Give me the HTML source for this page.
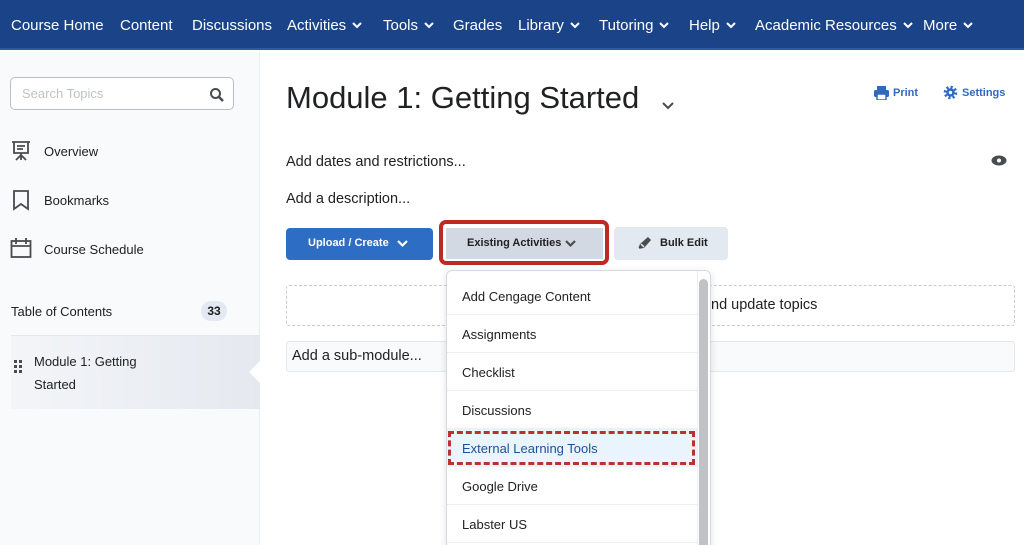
<!DOCTYPE html>
<html><head><meta charset="utf-8"><style>
*{margin:0;padding:0;box-sizing:border-box}
html,body{width:1024px;height:545px;overflow:hidden}
body{background:#fff;font-family:"Liberation Sans",sans-serif;color:#202122;position:relative}
.a{position:absolute;white-space:nowrap}
.nav{position:absolute;left:0;top:0;width:1024px;height:50px;background:#1b4488;border-bottom:2px solid #2d5aa3}
.nav span{position:absolute;top:17px;color:#fff;font-size:15px;line-height:18px}
.ch{display:inline-block;vertical-align:middle;margin-left:6px;margin-top:-2px}
.side{position:absolute;left:0;top:52px;width:260px;height:493px;background:#f9fafb;border-right:1px solid #eceef1}
.dd{position:absolute;left:446px;top:270px;width:265px;height:280px;background:#fff;border:1px solid #d6dae0;border-radius:6px;box-shadow:0 2px 8px rgba(0,0,0,.12);overflow:hidden}
.it{position:absolute;left:0;width:250px;height:38px;border-bottom:1px solid #eceef1;font-size:13px;padding:12px 0 0 15px;color:#202122}
</style></head><body>
<div class="nav">
<span style="left:11px">Course Home</span>
<span style="left:120px">Content</span>
<span style="left:192px">Discussions</span>
<span style="left:287px">Activities<svg class="ch" width="10" height="7" viewBox="0 0 10 7"><path d="M1 1l4 4 4-4" fill="none" stroke="#fff" stroke-width="2"/></svg></span>
<span style="left:383px">Tools<svg class="ch" width="10" height="7" viewBox="0 0 10 7"><path d="M1 1l4 4 4-4" fill="none" stroke="#fff" stroke-width="2"/></svg></span>
<span style="left:453px">Grades</span>
<span style="left:518px">Library<svg class="ch" width="10" height="7" viewBox="0 0 10 7"><path d="M1 1l4 4 4-4" fill="none" stroke="#fff" stroke-width="2"/></svg></span>
<span style="left:599px">Tutoring<svg class="ch" width="10" height="7" viewBox="0 0 10 7"><path d="M1 1l4 4 4-4" fill="none" stroke="#fff" stroke-width="2"/></svg></span>
<span style="left:689px">Help<svg class="ch" width="10" height="7" viewBox="0 0 10 7"><path d="M1 1l4 4 4-4" fill="none" stroke="#fff" stroke-width="2"/></svg></span>
<span style="left:755px">Academic Resources<svg class="ch" width="10" height="7" viewBox="0 0 10 7"><path d="M1 1l4 4 4-4" fill="none" stroke="#fff" stroke-width="2"/></svg></span>
<span style="left:923px">More<svg class="ch" width="10" height="7" viewBox="0 0 10 7"><path d="M1 1l4 4 4-4" fill="none" stroke="#fff" stroke-width="2"/></svg></span>
</div>
<div class="side">
<div class="a" style="left:10px;top:25px;width:224px;height:33px;border:1px solid #b9bec5;border-radius:5px;background:#fff;font-size:13px;color:#bfc3c8;padding:8px 11px">Search Topics</div>
<svg class="a" style="left:209px;top:35px" width="16" height="16" viewBox="0 0 16 16"><circle cx="6.5" cy="6.5" r="4.5" fill="none" stroke="#494c4e" stroke-width="2"/><path d="M10 10l4 4" stroke="#494c4e" stroke-width="2.5"/></svg>
<svg class="a" style="left:10px;top:88px" width="22" height="22" viewBox="0 0 22 22" fill="none" stroke="#494c4e" stroke-width="1.8"><path d="M2 2h18M4 2v11h14V2M7 6h8M7 9h6M11 13v7M11 15l-5 5M11 15l5 5"/></svg>
<div class="a" style="left:44px;top:92px;font-size:13px">Overview</div>
<svg class="a" style="left:12px;top:137px" width="18" height="22" viewBox="0 0 18 22" fill="none" stroke="#494c4e" stroke-width="1.8"><path d="M2 2h14v18l-7-5-7 5z"/></svg>
<div class="a" style="left:44px;top:141px;font-size:13px">Bookmarks</div>
<svg class="a" style="left:10px;top:185px" width="22" height="22" viewBox="0 0 22 22" fill="none" stroke="#494c4e" stroke-width="1.8"><rect x="1.5" y="4" width="19" height="16"/><path d="M1.5 9h19M6 1v6M16 1v6"/></svg>
<div class="a" style="left:44px;top:190px;font-size:13px">Course Schedule</div>
<div class="a" style="left:11px;top:252px;font-size:13px">Table of Contents</div>
<div class="a" style="left:201px;top:249px;width:26px;height:20px;border-radius:10px;background:#e3e9f1;font-size:12px;font-weight:bold;text-align:center;padding-top:3px">33</div>
<div class="a" style="left:11px;top:283px;width:249px;height:74px;background:linear-gradient(90deg,#f3f5f8,#e5e9ef);border-top:1px solid #e3e6ea"></div>
<svg class="a" style="left:14px;top:308px" width="8" height="13" viewBox="0 0 8 13" fill="#494c4e"><rect x="0" y="0" width="3" height="3"/><rect x="5" y="0" width="3" height="3"/><rect x="0" y="5" width="3" height="3"/><rect x="5" y="5" width="3" height="3"/><rect x="0" y="10" width="3" height="3"/><rect x="5" y="10" width="3" height="3"/></svg>
<div class="a" style="left:34px;top:298px;font-size:13px;line-height:23px">Module 1: Getting<br>Started</div>
<div class="a" style="left:249px;top:309px;width:0;height:0;border-top:11px solid transparent;border-bottom:11px solid transparent;border-right:11px solid #fff"></div>
</div>
<div class="a" style="left:286px;top:80px;font-size:31px;color:#202122">Module 1: Getting Started</div>
<svg class="a" style="left:661px;top:101px" width="14" height="10" viewBox="0 0 14 10"><path d="M2 2l5 5 5-5" fill="none" stroke="#494c4e" stroke-width="2"/></svg>
<svg class="a" style="left:874px;top:86px" width="15" height="14" viewBox="0 0 15 14" fill="#2d6ac0"><rect x="3" y="0" width="9" height="4"/><rect x="0" y="4" width="15" height="7" rx="1.5"/><rect x="3" y="8" width="9" height="6" fill="#fff" stroke="#2d6ac0" stroke-width="1.5"/></svg>
<div class="a" style="left:893px;top:87px;font-size:11px;font-weight:bold;color:#2d6ac0">Print</div>
<svg class="a" style="left:943px;top:85px" width="15" height="15" viewBox="0 0 16 16"><circle cx="8" cy="8" r="5.5" fill="none" stroke="#2d6ac0" stroke-width="3.5" stroke-dasharray="2.2 2.1"/><circle cx="8" cy="8" r="4.5" fill="#2d6ac0"/><circle cx="8" cy="8" r="1.8" fill="#fff"/></svg>
<div class="a" style="left:962px;top:87px;font-size:11px;font-weight:bold;color:#2d6ac0">Settings</div>
<div class="a" style="left:286px;top:154px;font-size:14.5px">Add dates and restrictions...</div>
<svg class="a" style="left:991px;top:155px" width="16" height="11" viewBox="0 0 16 11"><ellipse cx="8" cy="5.5" rx="7.5" ry="5" fill="#494c4e"/><circle cx="8" cy="5.5" r="2" fill="#fff"/></svg>
<div class="a" style="left:286px;top:191px;font-size:14.5px">Add a description...</div>
<div class="a" style="left:286px;top:228px;width:147px;height:32px;background:#2e6dc4;border-radius:4px;color:#fff;font-size:11px;font-weight:bold;padding:9px 0 0 22px">Upload / Create</div>
<svg class="a" style="left:396px;top:239px" width="13" height="9" viewBox="0 0 13 9"><path d="M2 2l4.5 4.5L11 2" fill="none" stroke="#fff" stroke-width="2.2"/></svg>
<div class="a" style="left:439px;top:220px;width:170px;height:45px;border:4px solid #bd2a24;border-radius:7px"></div>
<div class="a" style="left:446px;top:228px;width:157px;height:31px;background:#d3d9e2;font-size:11px;font-weight:bold;color:#202122;padding:9px 0 0 21px">Existing Activities</div>
<svg class="a" style="left:564px;top:239px" width="13" height="9" viewBox="0 0 13 9"><path d="M2 2l4.5 4.5L11 2" fill="none" stroke="#494c4e" stroke-width="2.2"/></svg>
<div class="a" style="left:614px;top:227px;width:114px;height:33px;background:#e3e9f1;border-radius:4px;font-size:11px;font-weight:bold;padding:10px 0 0 46px">Bulk Edit</div>
<svg class="a" style="left:635px;top:235px" width="18" height="17" viewBox="0 0 18 17"><path d="M3 14l2-5 8-7 3 3-7 8z" fill="#494c4e"/><path d="M1 16l3-3M6 9l3 3" stroke="#e3e9f1" stroke-width="1.5"/></svg>
<div class="a" style="left:286px;top:285px;width:729px;height:41px;border:1px dashed #c7cbd0;border-radius:3px"></div>
<div class="a" style="left:711px;top:297px;font-size:14.5px">nd update topics</div>
<div class="a" style="left:286px;top:341px;width:729px;height:31px;border:1px solid #e3e6ea;border-radius:3px;background:#f9fafb;font-size:14.5px;padding:6px 0 0 5px">Add a sub-module...</div>
<div class="dd">
<div class="it" style="top:6px">Add Cengage Content</div>
<div class="it" style="top:44px">Assignments</div>
<div class="it" style="top:82px">Checklist</div>
<div class="it" style="top:120px">Discussions</div>
<div class="it" style="top:158px;background:#eaf4fd;color:#1c4f9c">External Learning Tools</div>
<div class="a" style="left:1px;top:160px;width:247px;height:34px;border:3px dashed #b8322e"></div>
<div class="it" style="top:196px">Google Drive</div>
<div class="it" style="top:234px">Labster US</div>
<div class="a" style="left:250px;top:0;width:14px;height:280px;background:#fff;border-left:1px solid #eceef1"></div>
<div class="a" style="left:252px;top:8px;width:9px;height:280px;background:#c0c2c5;border-radius:5px"></div>
</div>
</body></html>
